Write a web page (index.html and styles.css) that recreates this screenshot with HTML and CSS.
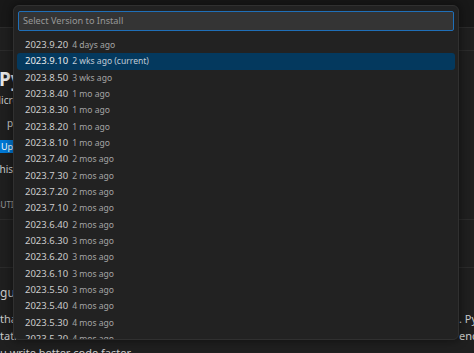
FILE: index.html
```html
<!DOCTYPE html>
<html lang="en">
<head>
<meta charset="utf-8">
<title>Select Version to Install</title>
<link rel="stylesheet" href="styles.css">
</head>
<body>
<div class="page">
  <div class="tabs"></div>
  <div class="toolbar"></div>
  <div class="header">
    <div class="title">Python</div>
    <div class="publisher">Microsoft</div>
    <div class="desc">performance and more.</div>
    <div class="btn">Update</div>
    <div class="enabled">This extension is enabled globally.</div>
  </div>
  <div class="navtabs"><span class="navtab">CONTRIBUTIONS</span></div>
  <div class="section"></div>
  <div class="heading">guage support</div>
  <div class="para">
    <div class="pline"><span>that</span><span>. Pylance</span></div>
    <div class="pline"><span>tation</span><span>encies</span></div>
    <div class="pline"><span>u write better code faster.</span><span></span></div>
  </div>
</div>

<div class="quickpick">
  <div class="input">Select Version to Install</div>
  <div class="list">
    <div class="row"><span class="label">2023.9.20</span><span class="descr">4 days ago</span></div>
    <div class="row sel"><span class="label">2023.9.10</span><span class="descr">2 wks ago (current)</span></div>
    <div class="row"><span class="label">2023.8.50</span><span class="descr">3 wks ago</span></div>
    <div class="row"><span class="label">2023.8.40</span><span class="descr">1 mo ago</span></div>
    <div class="row"><span class="label">2023.8.30</span><span class="descr">1 mo ago</span></div>
    <div class="row"><span class="label">2023.8.20</span><span class="descr">1 mo ago</span></div>
    <div class="row"><span class="label">2023.8.10</span><span class="descr">1 mo ago</span></div>
    <div class="row"><span class="label">2023.7.40</span><span class="descr">2 mos ago</span></div>
    <div class="row"><span class="label">2023.7.30</span><span class="descr">2 mos ago</span></div>
    <div class="row"><span class="label">2023.7.20</span><span class="descr">2 mos ago</span></div>
    <div class="row"><span class="label">2023.7.10</span><span class="descr">2 mos ago</span></div>
    <div class="row"><span class="label">2023.6.40</span><span class="descr">2 mos ago</span></div>
    <div class="row"><span class="label">2023.6.30</span><span class="descr">3 mos ago</span></div>
    <div class="row"><span class="label">2023.6.20</span><span class="descr">3 mos ago</span></div>
    <div class="row"><span class="label">2023.6.10</span><span class="descr">3 mos ago</span></div>
    <div class="row"><span class="label">2023.5.50</span><span class="descr">3 mos ago</span></div>
    <div class="row"><span class="label">2023.5.40</span><span class="descr">4 mos ago</span></div>
    <div class="row"><span class="label">2023.5.30</span><span class="descr">4 mos ago</span></div>
    <div class="row"><span class="label">2023.5.20</span><span class="descr">4 mos ago</span></div>
  </div>
</div>
</body>
</html>
```
FILE: styles.css
```css
html, body {
  margin: 0;
  padding: 0;
}
body {
  width: 474px;
  height: 353px;
  overflow: hidden;
  position: relative;
  background: #1f1f1f;
  color: #cccccc;
  font-family: "Noto Sans", "Open Sans", sans-serif;
}
.page {
  width: 474px;
}
.tabs {
  height: 27px;
  background: #181818;
  border-bottom: 1px solid #2b2b2b;
}
.toolbar {
  height: 22px;
  border-bottom: 1px solid #2b2b2b;
}
.header {
  padding-top: 18px;
  white-space: nowrap;
}
.title {
  font-size: 19px;
  font-weight: 700;
  line-height: 20px;
  color: #e8e8e8;
  margin-left: -1px;
}
.publisher {
  margin-top: 2px;
  font-size: 10px;
  line-height: 18px;
  margin-left: -8px;
}
.desc {
  margin-top: 5px;
  font-size: 10px;
  line-height: 18px;
  margin-left: 7px;
}
.btn {
  margin-top: 8px;
  display: inline-block;
  height: 13px;
  line-height: 13px;
  font-size: 9px;
  color: #ffffff;
  background: #0078d4;
  padding: 0 8px 0 1px;
}
.enabled {
  margin-top: 5px;
  font-size: 10px;
  line-height: 18px;
  margin-left: -6px;
}
.navtabs {
  margin-top: 13px;
  height: 28px;
  line-height: 28px;
  border-bottom: 1px solid #2b2b2b;
  font-size: 8px;
  color: #9d9d9d;
  white-space: nowrap;
}
.navtab {
  display: inline-block;
  margin-left: -34px;
}
.section {
  height: 47px;
  border-bottom: 1px solid #2b2b2b;
}
.heading {
  margin-top: 14px;
  font-size: 12px;
  line-height: 22px;
  white-space: nowrap;
}
.para {
  margin-top: 6px;
  font-size: 11px;
  line-height: 17px;
  color: #cccccc;
}
.pline {
  display: grid;
  grid-template-columns: 459px auto;
  white-space: nowrap;
}
.quickpick {
  position: absolute;
  left: 13px;
  top: 5px;
  width: 446px;
  height: 335px;
  box-sizing: border-box;
  background: #222222;
  border: 1px solid #303030;
  border-radius: 6px;
  box-shadow: 0 0 8px 2px rgba(0, 0, 0, 0.36);
  padding: 5px 3px 0;
  overflow: hidden;
  display: flex;
  flex-direction: column;
}
.input {
  margin: 0 1px;
  height: 20px;
  box-sizing: border-box;
  border: 1px solid #1f6fb8;
  border-radius: 2px;
  background: #343434;
  color: #989898;
  font-size: 9.2px;
  line-height: 18px;
  padding-left: 4px;
}
.list {
  margin-top: 6px;
  flex: 1;
  overflow: hidden;
}
.row {
  height: 16.33px;
  line-height: 16.33px;
  padding-left: 8px;
  font-size: 9.5px;
  white-space: nowrap;
  border-radius: 3px;
}
.label {
  color: #cccccc;
}
.descr {
  color: #a4a4a4;
  margin-left: 4px;
  font-size: 0.9em;
}
.row.sel {
  background: #04395e;
}
.row.sel .label {
  color: #ececec;
}
.row.sel .descr {
  color: #c0cbd6;
}
```
